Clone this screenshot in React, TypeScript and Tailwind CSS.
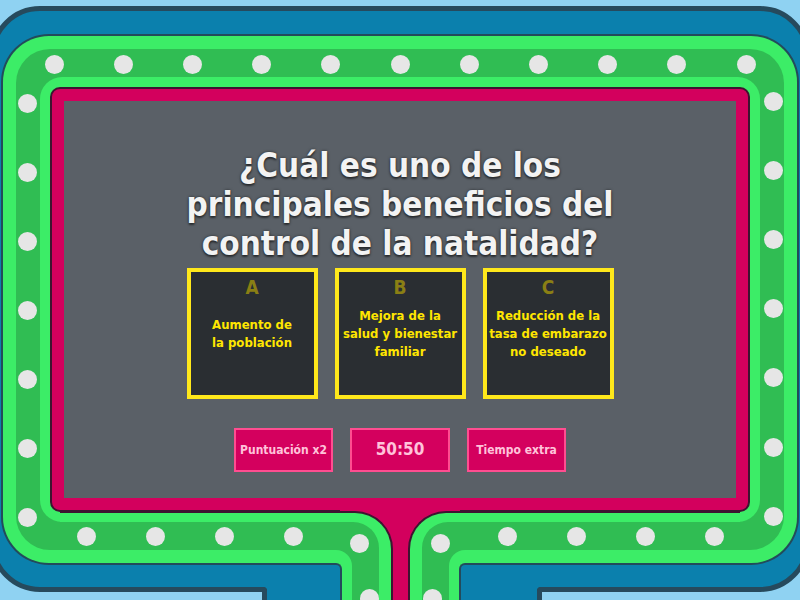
const font = "font-['DejaVu_Sans_Condensed','DejaVu_Sans',sans-serif]";

type Dot = { x: number; y: number };

const dots: Dot[] = [
  ...Array.from({ length: 11 }, (_, i) => ({ x: 54 + i * 69.2, y: 64 })),
  ...Array.from({ length: 7 }, (_, i) => ({ x: 27, y: 103 + i * 69 })),
  ...Array.from({ length: 7 }, (_, i) => ({ x: 773, y: 101 + i * 69.2 })),
  ...[86, 155, 224, 293, 507, 576, 645, 714].map((x) => ({ x, y: 536 })),
  { x: 359, y: 543 },
  { x: 369, y: 598 },
  { x: 440, y: 543 },
  { x: 432, y: 598 },
];

const answers = [
  { letter: "A", lines: ["Aumento de", "la población"] },
  { letter: "B", lines: ["Mejora de la", "salud y bienestar", "familiar"] },
  { letter: "C", lines: ["Reducción de la", "tasa de embarazo", "no deseado"] },
];

function AnswerBox({ letter, lines }: { letter: string; lines: string[] }) {
  return (
    <div className="grid h-[131px] w-[131px] border-4 border-[#ffe81b] bg-[#2a2e32]">
      <span className="[grid-area:1/1] self-start justify-self-center pt-[6px] text-[19px] font-bold leading-[19px] text-[#8a7f14]">
        {letter}
      </span>
      <p className="[grid-area:1/1] self-center whitespace-nowrap text-center text-[13px] font-bold leading-[18px] text-[#ffe600]">
        {lines.map((l, i) => (
          <span key={i} className="block">
            {l}
          </span>
        ))}
      </p>
    </div>
  );
}

function PowerButton({ label, big }: { label: string; big?: boolean }) {
  return (
    <div
      className={
        big
          ? "flex h-[44px] w-[100px] items-center justify-center border-2 border-[#ff4d90] bg-[#d4005e] text-[17px] font-bold text-[#ffc3da]"
          : "flex h-[44px] w-[99px] items-center justify-center border-2 border-[#ff4d90] bg-[#d4005e] text-[12px] font-bold text-[#ffc3da]"
      }
    >
      {label}
    </div>
  );
}

export default function App() {
  return (
    <div className={`relative h-[600px] w-[800px] overflow-hidden bg-[#8fd2f2] pt-[6px] ${font}`}>
      {/* outer blue frame */}
      <div className="ml-[-10px] h-[586px] w-[820px] rounded-[50px] border-[5px] border-[#264a5d] bg-[#0b80ad] pl-[8px] pt-[25px]">
        {/* green frame */}
        <div className="flex h-[527px] w-[794px] rounded-[46px] bg-[#3ced67] p-[13px] shadow-[0_0_0_2px_#234b5b]">
          <div className="flex flex-1 rounded-[34px] bg-[#30bd53] px-[24px] py-[28px]">
            <div className="flex flex-1 rounded-[22px] bg-[#3ced67] p-[10px]">
              <div className="flex flex-1 rounded-[10px] border-2 border-[#3d1430] bg-[#d3005d] p-[12px]">
                <div className="flex flex-1 flex-col items-center bg-[#5a6067] pt-[45px]">
                  <h1 className="text-center text-[33px] font-bold leading-[39px] text-[#f3f3f3] [text-shadow:0_0_3px_rgba(0,0,0,0.55),0_2px_2px_rgba(0,0,0,0.45)]">
                    ¿Cuál es uno de los
                    <br />
                    principales beneficios del
                    <br />
                    control de la natalidad?
                  </h1>
                  <div className="mt-[5px] flex gap-[17px]">
                    {answers.map((a) => (
                      <AnswerBox key={a.letter} letter={a.letter} lines={a.lines} />
                    ))}
                  </div>
                  <div className="mt-[29px] flex gap-[17px]">
                    <PowerButton label="Puntuación x2" />
                    <PowerButton label="50:50" big />
                    <PowerButton label="Tiempo extra" />
                  </div>
                </div>
              </div>
            </div>
          </div>
        </div>
      </div>

      {/* pink stem between the legs */}
      <div className="absolute left-[340px] top-[505px] h-[95px] w-[120px] bg-[#d3005d]" />

      {/* left leg */}
      <div className="absolute left-[60px] top-[511px] flex h-[120px] w-[333px] rounded-tr-[38px] border-r-2 border-t-2 border-[#3d1430] bg-[#3ced67] pr-[12px] pt-[9px]">
        <div className="flex flex-1 rounded-tr-[26px] bg-[#30bd53] pr-[27px] pt-[28px]">
          <div className="flex flex-1 rounded-tr-[16px] bg-[#3ced67] pr-[10px] pt-[13px]">
            <div className="flex flex-1 rounded-tr-[6px] border-r-2 border-t-2 border-[#234b5b] bg-[#0b80ad]">
              <div className="mt-[22px] w-[207px] rounded-tr-[4px] border-r-[5px] border-t-[5px] border-[#264a5d] bg-[#8fd2f2]" />
            </div>
          </div>
        </div>
      </div>

      {/* right leg */}
      <div className="absolute left-[408px] top-[511px] flex h-[120px] w-[332px] rounded-tl-[38px] border-l-2 border-t-2 border-[#3d1430] bg-[#3ced67] pl-[12px] pt-[9px]">
        <div className="flex flex-1 rounded-tl-[26px] bg-[#30bd53] pl-[27px] pt-[28px]">
          <div className="flex flex-1 rounded-tl-[16px] bg-[#3ced67] pl-[10px] pt-[13px]">
            <div className="flex flex-1 justify-end rounded-tl-[6px] border-l-2 border-t-2 border-[#234b5b] bg-[#0b80ad]">
              <div className="mt-[22px] w-[203px] rounded-tl-[4px] border-l-[5px] border-t-[5px] border-[#264a5d] bg-[#8fd2f2]" />
            </div>
          </div>
        </div>
      </div>

      {/* marquee lights */}
      {dots.map((d, i) => (
        <span
          key={i}
          className="absolute h-[19px] w-[19px] rounded-full bg-[#e6e6e6]"
          style={{ left: d.x - 9.5, top: d.y - 9.5 }}
        />
      ))}
    </div>
  );
}
